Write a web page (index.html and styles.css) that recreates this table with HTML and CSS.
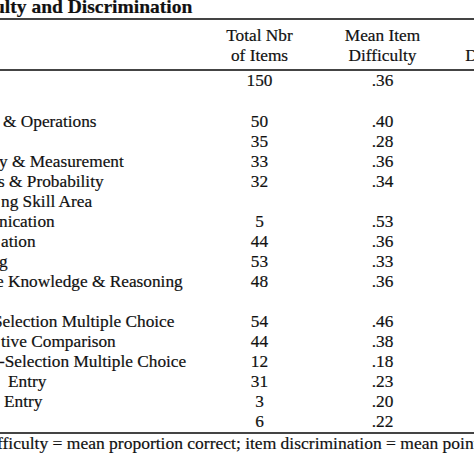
FILE: index.html
```html
<!DOCTYPE html>
<html>
<head>
    <title>Item Difficulty and Discrimination</title>
    <meta charset="utf-8">
    <meta name="viewport" content="width=device-width, initial-scale=1">
    <link rel="stylesheet" href="styles.css">
</head>

<body>
    <main class="page">
        <h1 class="title">ulty and Discrimination</h1>

        <table class="stats">
            <thead>
                <tr>
                    <th class="label"></th>
                    <th>Total Nbr<br>of Items</th>
                    <th>Mean Item<br>Difficulty</th>
                    <th>Mean Item<br>Discrimination</th>
                </tr>
            </thead>
            <tbody>
                <tr><td class="label"></td><td>150</td><td>.36</td><td></td></tr>
                <tr class="gap"><td class="label"></td><td></td><td></td><td></td></tr>
                <tr><td class="label in-3">&amp; Operations</td><td>50</td><td>.40</td><td></td></tr>
                <tr><td class="label"></td><td>35</td><td>.28</td><td></td></tr>
                <tr><td class="label cut-1">y &amp; Measurement</td><td>33</td><td>.36</td><td></td></tr>
                <tr><td class="label cut-2">s &amp; Probability</td><td>32</td><td>.34</td><td></td></tr>
                <tr><td class="label in-1">ng Skill Area</td><td></td><td></td><td></td></tr>
                <tr><td class="label cut-1">nication</td><td>5</td><td>.53</td><td></td></tr>
                <tr><td class="label in-1">ation</td><td>44</td><td>.36</td><td></td></tr>
                <tr><td class="label cut-1">g</td><td>53</td><td>.33</td><td></td></tr>
                <tr><td class="label cut-4">e Knowledge &amp; Reasoning</td><td>48</td><td>.36</td><td></td></tr>
                <tr><td class="label"></td><td></td><td></td><td></td></tr>
                <tr><td class="label cut-7">Selection Multiple Choice</td><td>54</td><td>.46</td><td></td></tr>
                <tr><td class="label in-1">tive Comparison</td><td>44</td><td>.38</td><td></td></tr>
                <tr><td class="label cut-1">-Selection Multiple Choice</td><td>12</td><td>.18</td><td></td></tr>
                <tr><td class="label in-8">Entry</td><td>31</td><td>.23</td><td></td></tr>
                <tr><td class="label in-4">Entry</td><td>3</td><td>.20</td><td></td></tr>
                <tr><td class="label"></td><td>6</td><td>.22</td><td></td></tr>
            </tbody>
        </table>

        <p class="note">fficulty = mean proportion correct; item discrimination = mean point-biserial correlation.</p>
    </main>
</body>
</html>
```

FILE: styles.css
```css
:root {
    --ink: #111;
    --rule: #444;
}

body {
    margin: 0;
    background-color: #fff;
    color: var(--ink);
    font-family: "Liberation Serif", "Times New Roman", serif;
    -webkit-text-stroke: 0.2px var(--ink);
}
.page {
    width: 474px;
    height: 474px;
    overflow: hidden;
}
.title {
    margin: -1px 0 3px;
    font-size: 19.5px;
    line-height: 16px;
    font-weight: bold;
    white-space: nowrap;
    text-indent: -6px;
}

.stats {
    table-layout: fixed;
    width: 578px;
    border-collapse: collapse;
    border-top: 2px solid var(--rule);
    border-bottom: 2px solid var(--rule);
    font-size: 17.3px;
    line-height: 20px;
}
.stats th {
    font-weight: normal;
    padding: 6px 0 3px;
    border-bottom: 2px solid var(--rule);
    white-space: nowrap;
}
.stats td {
    padding: 0;
    height: 20px;
    text-align: center;
    white-space: nowrap;
}
.stats th:nth-child(1) { width: 210px; }
.stats th:nth-child(2) { width: 99px; }
.stats th:nth-child(3) { width: 147px; }
.stats th:nth-child(4) { width: 122px; }

.stats td.label {
    text-align: left;
}
.stats .gap td {
    height: 21px;
}
.in-1 { text-indent: 1px; }
.in-3 { text-indent: 3px; }
.in-4 { text-indent: 4px; }
.in-8 { text-indent: 8px; }
.cut-1 { text-indent: -1px; }
.cut-2 { text-indent: -2px; }
.cut-4 { text-indent: -4px; }
.cut-7 { text-indent: -7px; }

.note {
    margin: 0;
    font-size: 17.5px;
    line-height: 18px;
    white-space: nowrap;
    text-indent: -3px;
}
```
